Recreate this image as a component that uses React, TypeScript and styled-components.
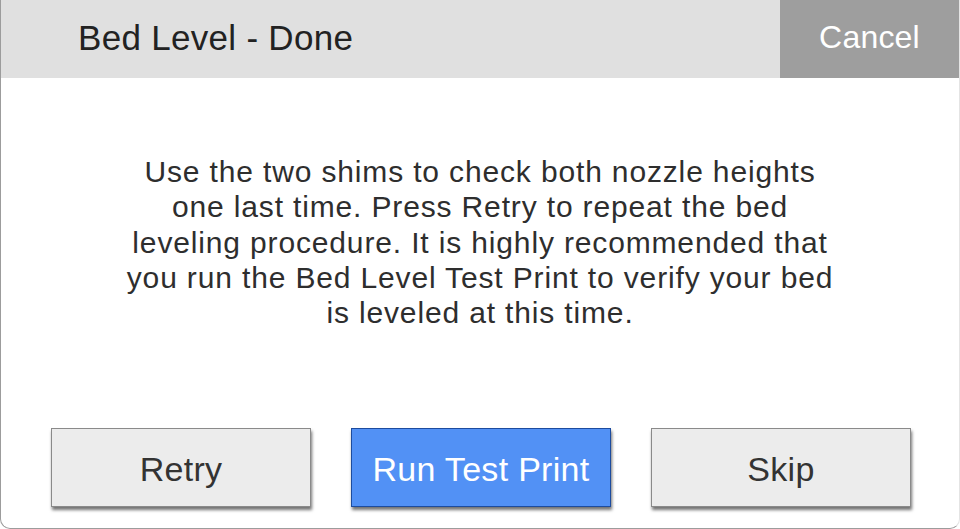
import React from "react";
import styled, { createGlobalStyle } from "styled-components";

const GlobalStyle = createGlobalStyle`
  html, body {
    margin: 0;
    padding: 0;
    background: #ffffff;
  }
  body {
    font-family: "Liberation Sans", Arial, Helvetica, sans-serif;
  }
`;

const Screen = styled.div`
  box-sizing: border-box;
  width: 960px;
  height: 529px;
  display: flex;
  flex-direction: column;
  background: #ffffff;
  border-left: 1px solid #9c9c9c;
  border-right: 1px solid #e4e4e4;
  border-bottom: 1px solid #9c9c9c;
  border-radius: 0 0 10px 10px;
  overflow: hidden;
`;

const Header = styled.div`
  display: flex;
  height: 78px;
  background: #e0e0e0;
`;

const Title = styled.div`
  flex: 1;
  padding-left: 77px;
  font-size: 35px;
  line-height: 76px;
  letter-spacing: 0.3px;
  color: #222222;
`;

const CancelButton = styled.div`
  width: 179px;
  background: #9e9e9e;
  color: #ffffff;
  font-size: 32px;
  line-height: 74px;
  letter-spacing: 0.2px;
  text-align: center;
  cursor: pointer;
`;

const Message = styled.div`
  flex: 1;
  padding-top: 76px;
  font-size: 30px;
  line-height: 35.3px;
  letter-spacing: 0.85px;
  color: #2e2e2e;
  text-align: center;
`;

const ButtonRow = styled.div`
  display: flex;
  justify-content: center;
  gap: 40px;
  padding: 0 0 21px 2px;
`;

const ActionButton = styled.div<{ $primary?: boolean }>`
  box-sizing: border-box;
  width: 260px;
  height: 79px;
  display: flex;
  align-items: center;
  justify-content: center;
  font-size: 34px;
  letter-spacing: 0.3px;
  padding-top: 4px;
  color: ${(p) => (p.$primary ? "#ffffff" : "#333333")};
  background: ${(p) => (p.$primary ? "#5291f5" : "#ececec")};
  border: 1px solid ${(p) => (p.$primary ? "#1d4c9e" : "#8a8a8a")};
  box-shadow: 1px 3px 3px rgba(0, 0, 0, 0.55);
  cursor: pointer;
`;

export default function App() {
  return (
    <>
      <GlobalStyle />
      <Screen>
        <Header>
          <Title>Bed Level - Done</Title>
          <CancelButton>Cancel</CancelButton>
        </Header>
        <Message>
          Use the two shims to check both nozzle heights
          <br />
          one last time. Press Retry to repeat the bed
          <br />
          leveling procedure. It is highly recommended that
          <br />
          you run the Bed Level Test Print to verify your bed
          <br />
          is leveled at this time.
        </Message>
        <ButtonRow>
          <ActionButton>Retry</ActionButton>
          <ActionButton $primary>Run Test Print</ActionButton>
          <ActionButton>Skip</ActionButton>
        </ButtonRow>
      </Screen>
    </>
  );
}
